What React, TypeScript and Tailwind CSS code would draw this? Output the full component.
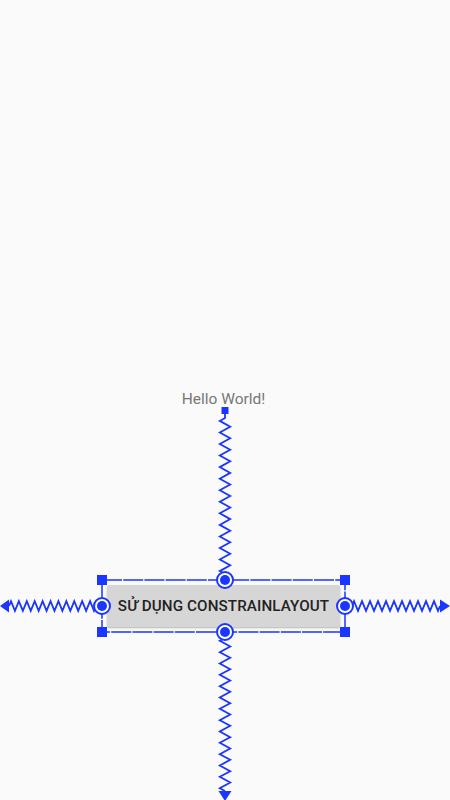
import React from "react";

const BLUE = "#1a36ff";

// zigzag points along an axis: [t, offset]
function zigzag(len: number, period: number, amp: number): [number, number][] {
  const n = Math.max(2, Math.round(len / (period / 2)));
  const pts: [number, number][] = [[0, 0]];
  for (let i = 0; i < n; i++) {
    pts.push([((i + 0.5) * len) / n, i % 2 ? amp : -amp]);
  }
  pts.push([len, 0]);
  return pts;
}

const hPath = (x1: number, x2: number, y: number) => {
  const pts = zigzag(x2 - x1, 8, 4.8);
  return "M" + pts.map(([t, o]) => `${(x1 + t).toFixed(2)} ${(y + o).toFixed(2)}`).join(" L");
};

const vPath = (y1: number, y2: number, x: number) => {
  const pts = zigzag(y2 - y1, 11.5, 5.2);
  return "M" + pts.map(([t, o]) => `${(x + o).toFixed(2)} ${(y1 + t).toFixed(2)}`).join(" L");
};

const Handle: React.FC<{ cx: number; cy: number }> = ({ cx, cy }) => (
  <g>
    <circle cx={cx} cy={cy} r={8} fill="#ffffff" stroke={BLUE} strokeWidth={2} />
    <circle cx={cx} cy={cy} r={5} fill={BLUE} />
  </g>
);

const Corner: React.FC<{ cx: number; cy: number }> = ({ cx, cy }) => (
  <rect x={cx - 5} y={cy - 5} width={10} height={10} fill={BLUE} />
);

export default function App() {
  // frame overlay: frame rect from (10,10) to (253,62)
  const L = 10;
  const T = 10;
  const R = 253;
  const B = 62;
  const mx = 133;
  const my = (T + B) / 2;

  return (
    <div className="w-[450px] h-[800px] bg-[#fafafa] overflow-hidden flex flex-col items-center pt-[391px] font-['Roboto','Liberation_Sans',sans-serif]">
      <div className="h-[15px] leading-[17px] text-[15.5px] text-[#777777] -ml-[3px]">Hello World!</div>

      <svg width={20} height={174} viewBox="0 0 20 174" className="block -ml-[1px] shrink-0">
        <rect x={6.5} y={1} width={7} height={7} fill={BLUE} />
        <path d={`M10 8 L10 12 ${vPath(12, 168, 10).replace("M", "L")}`} fill="none" stroke={BLUE} strokeWidth={1.8} strokeLinejoin="miter" />
      </svg>

      <div className="flex w-[450px] h-[52px] shrink-0">
        <svg width={102} height={52} viewBox="0 0 102 52" className="block shrink-0">
          <polygon points="0,26 9,19.5 9,32.5" fill={BLUE} />
          <path d={hPath(9, 96, 26)} fill="none" stroke={BLUE} strokeWidth={1.8} />
        </svg>

        <div className="relative w-[243px] h-[52px] shrink-0 p-[5px]">
          <div className="w-full h-full rounded-[2px] bg-[#d6d6d6] shadow-[0_1px_2px_rgba(0,0,0,0.28)] flex items-center justify-center pt-[1px]">
            <span className="text-[15.2px] font-medium text-[#222222] tracking-[0.1px] leading-none">
              SỬ DỤNG CONSTRAINLAYOUT
            </span>
          </div>
          <svg
            width={263}
            height={72}
            viewBox="0 0 263 72"
            className="absolute -left-[10px] -top-[10px] pointer-events-none overflow-visible"
          >
            <rect
              x={L}
              y={T}
              width={R - L}
              height={B - T}
              fill="none"
              stroke={BLUE}
              strokeWidth={1.5}
              strokeDasharray="20 1.2"
            />
            <Corner cx={L} cy={T} />
            <Corner cx={R} cy={T} />
            <Corner cx={L} cy={B} />
            <Corner cx={R} cy={B} />
            <Handle cx={mx} cy={T} />
            <Handle cx={mx} cy={B} />
            <Handle cx={L} cy={my} />
            <Handle cx={R} cy={my} />
          </svg>
        </div>

        <svg width={105} height={52} viewBox="0 0 105 52" className="block shrink-0">
          <path d={hPath(7, 95, 26)} fill="none" stroke={BLUE} strokeWidth={1.8} />
          <polygon points="105,26 95,19.5 95,32.5" fill={BLUE} />
        </svg>
      </div>

      <svg width={30} height={168} viewBox="0 0 30 168" className="block shrink-0 -ml-[1px]">
        <path d={vPath(6, 159, 15)} fill="none" stroke={BLUE} strokeWidth={1.8} />
        <polygon points="8.5,159 21.5,159 15,169" fill={BLUE} />
      </svg>
    </div>
  );
}
